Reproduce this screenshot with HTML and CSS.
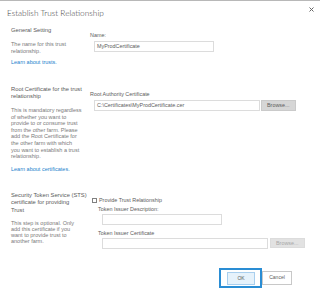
FILE: index.html
```html
<!DOCTYPE html>
<html>
<head>
<meta charset="utf-8">
<link rel="stylesheet" href="styles.css">
</head>
<body>
<div class="dialog">
  <div class="header">
    <h1 class="title">Establish Trust Relationship</h1>
    <span class="close">
      <svg width="5" height="5" viewBox="0 0 5 5"><path d="M0.5 0.5L4.5 4.5M4.5 0.5L0.5 4.5" stroke="#666" stroke-width="1"/></svg>
    </span>
  </div>

  <div class="section s1">
    <div class="left">
      <div class="sec-title">General Setting</div>
      <div class="desc">The name for this trust<br>relationship.</div>
      <a class="link link1">Learn about trusts.</a>
    </div>
    <div class="right">
      <div class="label">Name:</div>
      <div class="input name-input">MyProdCertificate</div>
    </div>
  </div>

  <div class="section s2">
    <div class="left">
      <div class="sec-title">Root Certificate for the trust<br>relationship</div>
      <div class="desc">This is mandatory regardless<br>of whether you want to<br>provide to or consume trust<br>from the other farm. Please<br>add the Root Certificate for<br>the other farm with which<br>you want to establish a trust<br>relationship.</div>
      <a class="link">Learn about certificates.</a>
    </div>
    <div class="right">
      <div class="label">Root Authority Certificate</div>
      <div class="file-row">
        <div class="input file-input">C:\Certificates\MyProdCertificate.cer</div>
        <div class="browse">Browse...</div>
      </div>
    </div>
  </div>

  <div class="section s3">
    <div class="left">
      <div class="sec-title">Security Token Service (STS)<br>certificate for providing<br>Trust</div>
      <div class="desc desc3">This step is optional. Only<br>add this certificate if you<br>want to provide trust to<br>another farm.</div>
    </div>
    <div class="right">
      <div class="check-row"><span class="checkbox"></span><span class="label">Provide Trust Relationship</span></div>
      <div class="sub">
        <div class="label sub-label1">Token Issuer Description:</div>
        <div class="input desc-input"></div>
        <div class="label sub-label2">Token Issuer Certificate</div>
        <div class="file-row">
          <div class="input file-input2"></div>
          <div class="browse disabled">Browse...</div>
        </div>
      </div>
    </div>
  </div>

  <div class="footer">
    <div class="focus-ring"><div class="btn ok">OK</div></div>
    <div class="btn cancel">Cancel</div>
  </div>
</div>
</body>
</html>
```

FILE: styles.css
```css
html, body {
  margin: 0;
  padding: 0;
  background: #fff;
}
body {
  font-family: "Liberation Sans", Arial, sans-serif;
  color: #444;
}
.dialog {
  width: 320px;
  height: 290px;
  box-sizing: border-box;
  border-top: 1px solid #b8b8b8;
}
.header {
  box-sizing: border-box;
  display: flex;
  justify-content: space-between;
  align-items: flex-start;
  padding: 6px 6px 0 7px;
  height: 26px;
}
.title {
  margin: 0;
  font-family: Lato, "Open Sans", sans-serif;
  font-size: 8.3px;
  line-height: 12px;
  font-weight: 300;
  color: #3c3c3c;
}
.close {
  margin-top: 0;
  display: flex;
}
.section {
  display: grid;
  grid-template-columns: 90px 1fr;
}
.left {
  padding-left: 11px;
  white-space: nowrap;
}
.sec-title {
  color: #5a5a5a;
  font-size: 5.8px;
  line-height: 7.5px;
}
.desc {
  color: #7a7a7a;
  font-size: 5.5px;
  line-height: 6.6px;
  margin-top: 6.5px;
}
.desc3 {
  margin-top: 5.5px;
  line-height: 6px;
}
.link {
  display: block;
  color: #1a7fcc;
  font-size: 5.5px;
  line-height: 6.6px;
  margin-top: 6.5px;
}
.link1 {
  margin-top: 4.5px;
}
.s1 {
  height: 58.5px;
}
.s2 {
  height: 106px;
}
.s3 {
  height: 75.5px;
}
.right {
  font-size: 5.4px;
  line-height: 7px;
  white-space: nowrap;
  padding-top: 5px;
}
.label {
  color: #5c5c5c;
}
.input {
  box-sizing: border-box;
  height: 11px;
  border: 1px solid #dcdcdc;
  background: #fff;
  color: #5c5c5c;
  font-size: 5.4px;
  line-height: 9px;
  padding-left: 2px;
  margin-top: 2px;
}
.name-input {
  width: 120px;
  margin-left: 4px;
}
.file-row {
  display: flex;
  align-items: flex-start;
  gap: 1px;
}
.file-input {
  width: 166px;
  margin-left: 4px;
}
.browse {
  box-sizing: border-box;
  margin-top: 2px;
  height: 11px;
  width: 35px;
  background: #d6d6d6;
  border: 1px solid #cacaca;
  color: #5c5c5c;
  font-size: 5.4px;
  line-height: 9px;
  padding-left: 5px;
}
.browse.disabled {
  height: 10px;
  background: #e2e2e2;
  border-color: #dcdcdc;
  color: #a8a8a8;
  margin-left: 1px;
}
.check-row {
  display: flex;
  align-items: center;
  gap: 2px;
  margin-left: 2px;
}
.checkbox {
  width: 3px;
  height: 3px;
  border: 1px solid #808080;
  background: #fff;
}
.sub {
  padding-left: 8px;
}
.sub-label1 {
  margin-top: 2px;
}
.desc-input {
  width: 120px;
  margin-left: 4px;
  margin-top: 1.5px;
}
.sub-label2 {
  margin-top: 4.5px;
}
.file-input2 {
  width: 166px;
  margin-left: 4px;
  margin-top: 1.5px;
}
.file-row .browse.disabled {
  margin-top: 1.5px;
}
.footer {
  display: flex;
  justify-content: flex-end;
  align-items: center;
  padding-right: 28px;
  padding-top: 1px;
}
.focus-ring {
  box-sizing: border-box;
  width: 43px;
  height: 20px;
  border: 2px solid #2a8dd4;
  display: flex;
  align-items: center;
  justify-content: center;
}
.btn {
  box-sizing: border-box;
  height: 13px;
  font-size: 5px;
  line-height: 11px;
  text-align: center;
  color: #5c5c5c;
}
.ok {
  width: 28px;
  background: #e6f2fb;
  border: 1px solid #a9cfee;
  margin-left: 1px;
}
.cancel {
  width: 30px;
  height: 14px;
  border: 1px solid #c8c8c8;
  background: #fff;
}
```
